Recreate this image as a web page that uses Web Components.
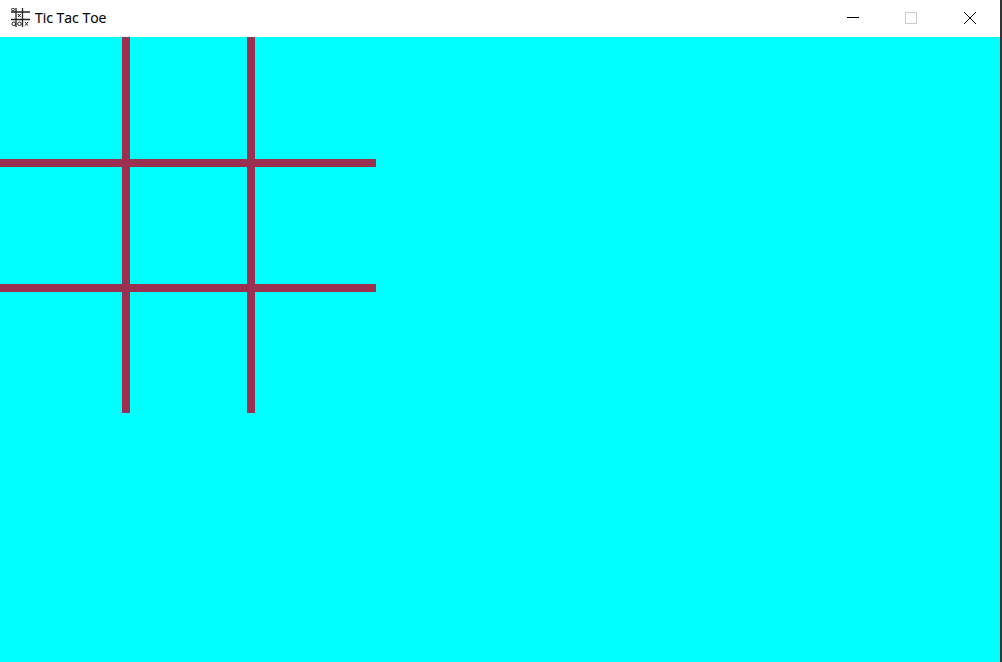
<!DOCTYPE html>
<html>
<head>
<meta charset="utf-8">
<title>Tic Tac Toe</title>
<style>
  html, body { margin: 0; height: 100%; overflow: hidden; background: #fff; }
  body { font-family: "Open Sans", "Noto Sans", sans-serif; }
</style>
</head>
<body>
<game-window>
  <title-bar slot="bar" heading="Tic Tac Toe"></title-bar>
  <game-board></game-board>
</game-window>

<script>
class GameWindow extends HTMLElement {
  constructor() {
    super();
    this.attachShadow({ mode: 'open' });
    this.shadowRoot.innerHTML = `
      <style>
        :host { display: flex; flex-direction: column; width: 1002px; height: 662px; box-sizing: border-box; border-right: 2px solid #333; }
        .content { flex: 1; background: #00ffff; }
      </style>
      <slot name="bar"></slot>
      <div class="content"><slot></slot></div>
    `;
  }
}

class TitleBar extends HTMLElement {
  constructor() {
    super();
    this.attachShadow({ mode: 'open' });
  }

  connectedCallback() {
    this.shadowRoot.innerHTML = `
      <style>
        :host { display: flex; align-items: center; box-sizing: border-box; height: 37px; padding: 0 2px 1px 0; background: #fff; color: #000; }
        .icon { width: 20px; height: 20px; margin-left: 10px; flex: none; }
        .heading { margin-left: 5px; flex: 1; font: 14px/20px "Open Sans", "Noto Sans", sans-serif; -webkit-text-stroke: 0.15px #000; }
        .btn { width: 58px; height: 36px; display: flex; align-items: center; justify-content: center; }
        .btn svg { width: 14px; height: 14px; display: block; }
      </style>
      <svg class="icon" viewBox="0 0 20 20" fill="none" stroke="#222" stroke-width="1">
        <path d="M6 0v19M12.5 0v19M1 4h19M1 11.5h19" stroke-width="1.3"/>
        <circle cx="3" cy="1.5" r="1.4"/>
        <path d="M8 6l2.6 3M10.6 6L8 9"/>
        <circle cx="3.8" cy="15.8" r="1.8"/>
        <circle cx="9.5" cy="15.8" r="1.8"/>
        <path d="M15 14l3 3.6M18 14l-3 3.6"/>
      </svg>
      <div class="heading">${this.getAttribute('heading')}</div>
      <div class="btn"><svg viewBox="0 0 14 14"><path d="M1 6.5h12" stroke="#000" stroke-width="1"/></svg></div>
      <div class="btn"><svg viewBox="0 0 14 14"><rect x="1.5" y="1.5" width="11" height="11" fill="none" stroke="#ccc" stroke-width="1"/></svg></div>
      <div class="btn"><svg viewBox="0 0 14 14"><path d="M2 1l12 12M14 1L2 13" stroke="#000" stroke-width="1"/></svg></div>
    `;
  }
}

class GameBoard extends HTMLElement {
  constructor() {
    super();
    this.attachShadow({ mode: 'open' });
    this.shadowRoot.innerHTML = `
      <style>
        :host {
          display: grid;
          width: 376px;
          height: 376px;
          grid-template-columns: 122px 8px 117px 8px 1fr;
          grid-template-rows: 122px 8px 117px 8px 1fr;
        }
        .v, .h { background: #9b3050; }
        .v { grid-row: 1 / -1; }
        .h { grid-column: 1 / -1; }
        .v.a { grid-column: 2; }
        .v.b { grid-column: 4; }
        .h.a { grid-row: 2; }
        .h.b { grid-row: 4; }
      </style>
      <div class="v a"></div>
      <div class="v b"></div>
      <div class="h a"></div>
      <div class="h b"></div>
    `;
  }
}

customElements.define('game-window', GameWindow);
customElements.define('title-bar', TitleBar);
customElements.define('game-board', GameBoard);
</script>
</body>
</html>
